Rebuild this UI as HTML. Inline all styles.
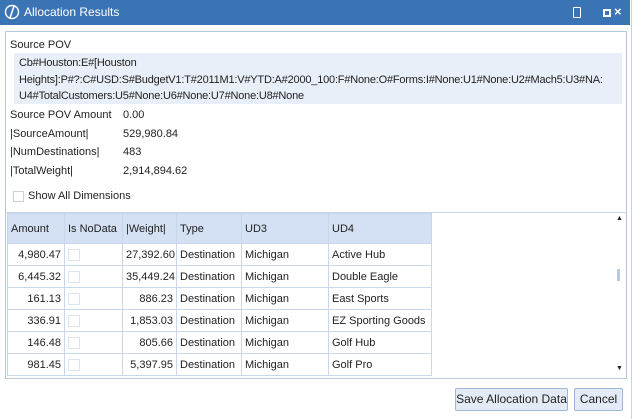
<!DOCTYPE html>
<html><head><style>
*{margin:0;padding:0;box-sizing:border-box}
body{width:635px;height:419px;background:#fff;font-family:"Liberation Sans",sans-serif;font-size:11px;color:#222;position:relative;overflow:hidden}
.t{position:absolute;white-space:nowrap}
#bar{position:absolute;left:0;top:0;width:630px;height:25px;background:#3a74b4}
#panel{position:absolute;left:5px;top:31px;width:622px;height:348px;border:1px solid #b8c8dc}
#pov{position:absolute;left:8px;top:21px;width:608px;height:51px;background:#e9eff8;letter-spacing:-0.2px}
table{border-collapse:collapse;position:absolute;left:1px;top:181px;table-layout:fixed;width:424px}
td,th{border:1px solid #c8d6ea;height:22px;padding:0 3px;font-weight:normal;text-align:left;white-space:nowrap;overflow:hidden}
th{background:#d4e0f3;height:30px}
td.r{text-align:right}
.cb{display:inline-block;width:12px;height:12px;border:1px solid #dde4ee;vertical-align:middle}
.btn{position:absolute;top:388px;height:23px;border:1px solid #9fb6d6;background:#e3ebf6;border-radius:2px;font-size:12px;line-height:21px;text-align:center}
</style></head><body>
<div id="bar">
<svg style="position:absolute;left:4px;top:4px" width="16" height="16" viewBox="0 0 16 16"><circle cx="8" cy="8" r="6.5" fill="none" stroke="#fff" stroke-width="1.4"/><path d="M10 2 L6 14" stroke="#fff" stroke-width="1.6"/></svg>
<div class="t" style="left:24px;top:5px;color:#fff;font-size:12px">Allocation Results</div>
<div style="position:absolute;left:573px;top:7px;width:8px;height:11px;border:1.5px solid #fff;border-radius:1px"></div>
<div style="position:absolute;left:603px;top:9px;width:8px;height:8px;border:2px solid #fff"></div>
<div class="t" style="left:614px;top:4px;color:#fff;font-size:13px;font-weight:bold">×</div>
</div>
<div style="position:absolute;left:631px;top:0;width:1px;height:419px;background:#c9d2de"></div>
<div id="panel">
<div class="t" style="left:4px;top:7px">Source POV</div>
<div id="pov">
<div class="t" style="left:5px;top:4px">Cb#Houston:E#[Houston</div>
<div class="t" style="left:5px;top:21px">Heights]:P#?:C#USD:S#BudgetV1:T#2011M1:V#YTD:A#2000_100:F#None:O#Forms:I#None:U1#None:U2#Mach5:U3#NA:</div>
<div class="t" style="left:5px;top:37px">U4#TotalCustomers:U5#None:U6#None:U7#None:U8#None</div>
</div>
<div class="t" style="left:4px;top:77px">Source POV Amount</div><div class="t" style="left:117px;top:77px">0.00</div>
<div class="t" style="left:4px;top:96px">|SourceAmount|</div><div class="t" style="left:117px;top:96px">529,980.84</div>
<div class="t" style="left:4px;top:114px">|NumDestinations|</div><div class="t" style="left:117px;top:114px">483</div>
<div class="t" style="left:4px;top:133px">|TotalWeight|</div><div class="t" style="left:117px;top:133px">2,914,894.62</div>
<div style="position:absolute;left:7px;top:159px;width:11px;height:11px;border:1px solid #c8d0dc"></div>
<div class="t" style="left:22px;top:158px">Show All Dimensions</div>
<div style="position:absolute;left:0;top:180px;width:620px;height:1px;background:#c8d6ea"></div>
<table>
<colgroup><col style="width:57px"><col style="width:58px"><col style="width:54px"><col style="width:65px"><col style="width:87px"><col style="width:103px"></colgroup>
<tr><th>Amount</th><th>Is NoData</th><th>|Weight|</th><th>Type</th><th>UD3</th><th>UD4</th></tr>
<tr><td class="r">4,980.47</td><td><span class="cb"></span></td><td class="r">27,392.60</td><td>Destination</td><td>Michigan</td><td>Active Hub</td></tr>
<tr><td class="r">6,445.32</td><td><span class="cb"></span></td><td class="r">35,449.24</td><td>Destination</td><td>Michigan</td><td>Double Eagle</td></tr>
<tr><td class="r">161.13</td><td><span class="cb"></span></td><td class="r">886.23</td><td>Destination</td><td>Michigan</td><td>East Sports</td></tr>
<tr><td class="r">336.91</td><td><span class="cb"></span></td><td class="r">1,853.03</td><td>Destination</td><td>Michigan</td><td>EZ Sporting Goods</td></tr>
<tr><td class="r">146.48</td><td><span class="cb"></span></td><td class="r">805.66</td><td>Destination</td><td>Michigan</td><td>Golf Hub</td></tr>
<tr><td class="r">981.45</td><td><span class="cb"></span></td><td class="r">5,397.95</td><td>Destination</td><td>Michigan</td><td>Golf Pro</td></tr>
</table>
<div class="t" style="left:610px;top:183px;font-size:7px">▲</div>
<div style="position:absolute;left:611px;top:237px;width:3px;height:12px;background:#b9c9df"></div>
<div class="t" style="left:610px;top:333px;font-size:7px">▼</div>
</div>
<div class="btn" style="left:455px;width:113px">Save Allocation Data</div>
<div class="btn" style="left:574px;width:49px">Cancel</div>
</body></html>
